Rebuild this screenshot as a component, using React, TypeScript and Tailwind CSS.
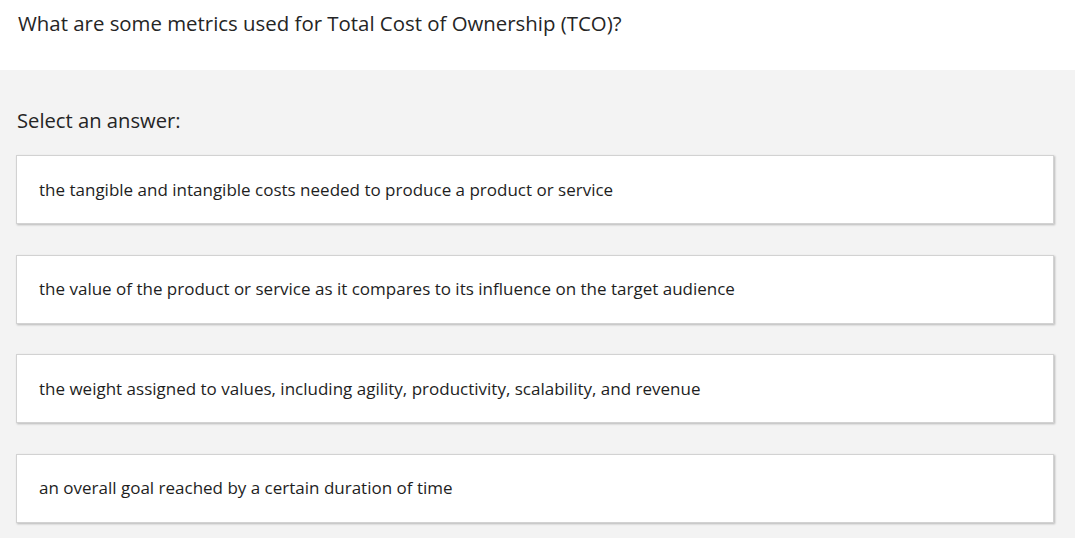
const answers = [
  "the tangible and intangible costs needed to produce a product or service",
  "the value of the product or service as it compares to its influence on the target audience",
  "the weight assigned to values, including agility, productivity, scalability, and revenue",
  "an overall goal reached by a certain duration of time",
];

export default function App() {
  return (
    <div className="min-h-[538px] bg-[#f3f3f3] font-['Open_Sans',sans-serif] text-[#252525]">
      <div className="h-[70px] bg-white px-[18px] pt-[8px]">
        <h1 className="text-[20.4px] leading-[30px]">
          What are some metrics used for Total Cost of Ownership (TCO)?
        </h1>
      </div>

      <div className="px-[16px] pt-[34px]">
        <p className="pl-[1px] text-[20.2px] leading-[32px]">Select an answer:</p>

        <div className="mt-[19px] flex flex-col gap-[30.5px] pr-[5px]">
          {answers.map((a) => (
            <button
              key={a}
              className="flex h-[69px] items-center border border-[#d2d2d2] bg-white pl-[22px] text-left text-[17px] text-[#1e1e1e] shadow-[1px_1px_2px_rgba(0,0,0,0.25)]"
            >
              {a}
            </button>
          ))}
        </div>
      </div>
    </div>
  );
}
